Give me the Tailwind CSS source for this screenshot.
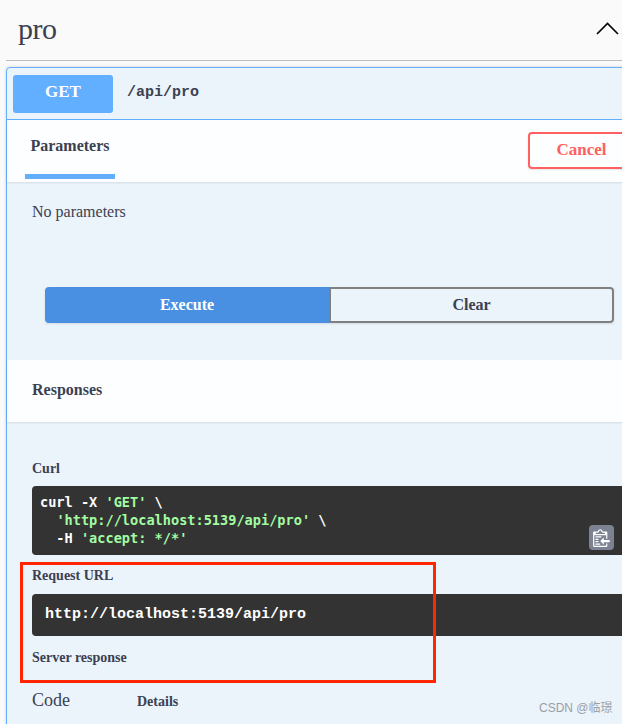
<!DOCTYPE html>
<html lang="en">
<head>
<meta charset="UTF-8">
<title>pro</title>
<script src="https://cdn.jsdelivr.net/npm/@tailwindcss/browser@4"></script>
</head>
<body class="bg-[#fafafa] font-['Liberation_Serif',serif] text-[#3b4151]">
<div class="relative h-[724px] w-[622px] overflow-hidden">

  <!-- tag header -->
  <div class="ml-[6px] flex h-[61px] w-[616px] items-center justify-between border-b border-[#bdbdbd] pb-[2px]">
    <h3 class="pl-3 text-[30px] leading-none tracking-[-0.5px]">pro</h3>
    <svg class="mr-[3px] mb-[2px]" width="23" height="13" viewBox="0 0 23 13" fill="none" stroke="#000" stroke-width="1.6"><path d="M1 12 11.5 1.500 22 12"/></svg>
  </div>

  <!-- operation -->
  <div class="mt-[6px] ml-[6px] w-[640px] rounded-l-[4px] border border-[#61affe] bg-[#ebf3fb] shadow-[0_0_3px_rgba(0,0,0,0.19)]">
    <div class="flex h-[52px] items-center border-b border-[#61affe] pl-[6px]">
      <span class="flex h-[38px] w-[100px] items-center justify-center rounded-[3px] bg-[#61affe] pb-[4px] text-[17px] font-bold text-white">GET</span>
      <span class="ml-[14px] font-['Liberation_Mono',monospace] text-[15px] font-bold">/api/pro</span>
    </div>

    <div class="flex h-[62px] items-center justify-between bg-[#fdfeff] pl-[18px] shadow-[0_1px_2px_rgba(0,0,0,0.1)]">
      <div class="flex h-[59px] w-[90px] items-center justify-center border-b-[5px] border-[#61affe] pt-[2px] pb-[4px] mt-[-3px] text-[16px] font-bold">Parameters</div>
      <button class="mr-[4px] mb-[1px] h-[37px] w-[113px] rounded-[4px] border-2 border-[#ff6060] pr-[6px] pb-[2px] text-[17px] font-bold text-[#ff6060] shadow-[0_1px_2px_rgba(0,0,0,0.1)]">Cancel</button>
    </div>

    <div class="h-[178px] pt-[20px] pl-[25px]">
      <p class="text-[16px] leading-[20px]">No parameters</p>
      <div class="mt-[65px] ml-[13px] flex h-[36px] w-[569px] shadow-[0_1px_2px_rgba(0,0,0,0.1)]">
        <button class="w-[284px] rounded-l-[4px] bg-[#4990e2] text-[16px] font-bold text-white">Execute</button>
        <button class="w-[285px] rounded-r-[4px] border-2 border-[#808080] text-[16px] font-bold">Clear</button>
      </div>
    </div>

    <div class="flex h-[62px] items-center bg-[#fdfeff] pl-[25px] shadow-[0_1px_2px_rgba(0,0,0,0.1)]">
      <h4 class="pb-[2px] text-[16px] font-bold">Responses</h4>
    </div>

    <div class="h-[320px] pt-[38px] pl-[25px]">
      <h5 class="text-[14px] leading-[18px] font-bold">Curl</h5>
      <pre class="mt-[8px] h-[69px] rounded-l-[4px] bg-[#333] pt-[7px] pl-[8px] font-['DejaVu_Sans_Mono',monospace] text-[13.6px] leading-[18px] font-bold text-white">curl -X <span class="text-[#a2fca2]">'GET'</span> \
  <span class="text-[#a2fca2]">'http://localhost:5139/api/pro'</span> \
  -H <span class="text-[#a2fca2]">'accept: */*'</span></pre>
      <h5 class="mt-[12px] text-[14px] leading-[18px] font-bold">Request URL</h5>
      <div class="mt-[9px] flex h-[42px] items-center rounded-l-[4px] bg-[#333] pl-[13px] font-['Liberation_Mono',monospace] text-[15px] font-bold text-white">http://localhost:5139/api/pro</div>
      <h5 class="mt-[13px] text-[14px] leading-[18px] font-bold">Server response</h5>
      <div class="mt-[23px] flex items-baseline">
        <span class="w-[105px] text-[18px] leading-[20px]">Code</span>
        <span class="text-[14px] font-bold">Details</span>
      </div>
    </div>
  </div>

  <!-- copy button -->
  <div class="absolute top-[525px] left-[589px] flex h-[25px] w-[25px] items-center justify-center rounded-[4px] bg-[#7d8293]">
    <svg width="18" height="19" viewBox="0 0 15 16" fill="#fff"><path d="M2 13h4v1H2v-1zm5-6H2v1h5V7zm2 3V8l-3 3 3 3v-2h5v-2H9zM4.500 9H2v1h2.500V9zM2 12h2.500v-1H2v1zm9 1h1v2c-.02.28-.11.52-.3.7-.19.18-.42.28-.7.3H1c-.55 0-1-.45-1-1V4c0-.55.45-1 1-1h3c0-1.110.89-2 2-2 1.110 0 2 .89 2 2h3c.55 0 1 .45 1 1v5h-1V6H1v9h10v-2zM2 5h8c0-.55-.45-1-1-1H8c-.55 0-1-.45-1-1s-.45-1-1-1-1 .45-1 1-.45 1-1 1H3c-.55 0-1 .45-1 1z"/></svg>
  </div>

  <!-- annotation -->
  <div class="absolute top-[562px] left-[20px] h-[121px] w-[416px] border-[3px] border-[#ff2600]"></div>

  <!-- watermark -->
  <div class="absolute top-[701px] left-[539px] font-['Liberation_Sans','Noto_Sans_CJK_SC',sans-serif] text-[12px] leading-[15px] text-[#9a9ea6]">CSDN @临璟</div>
</div>
</body>
</html>
